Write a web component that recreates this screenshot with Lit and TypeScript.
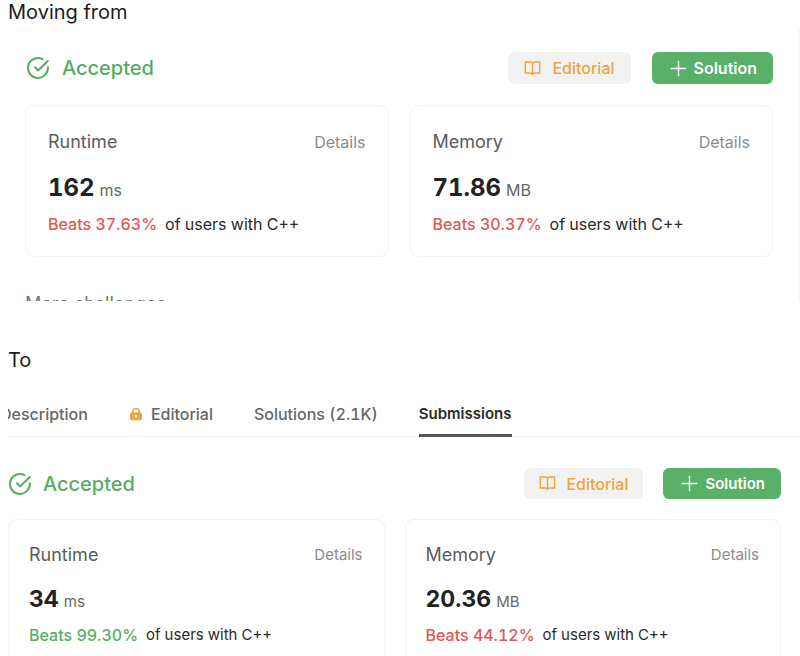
import { LitElement, html, css, svg, nothing } from "lit";
import { customElement, property } from "lit/decorators.js";

interface Stat {
  name: string;
  value: string;
  unit: string;
  beats: string;
  good?: boolean;
}

const checkIcon = svg`
  <path d="M21.9 11.2A10 10 0 1 1 16.6 3.1" />
  <path d="M9 11.3 12 14.5 21.8 5" />`;
const bookIcon = svg`
  <path d="M12 5.6C12 3.8 11 2.8 9.4 2.8H1.8V18.4H9.6C11 18.4 12 19 12 20.4C12 19 13 18.4 14.4 18.4H22.2V2.8H14.6C13 2.8 12 3.8 12 5.6ZM12 5.6V21" />`;
const plusIcon = svg`<path d="M12 1V23M1 12H23" />`;

@customElement("submission-result")
export class SubmissionResult extends LitElement {
  @property({ attribute: false }) stats: Stat[] = [];
  @property({ type: Boolean, reflect: true }) compact = false;

  static styles = css`
    :host {
      display: block;
      font-variant-numeric: tabular-nums;
      --body: 16px;
      --number: 24px;
    }
    :host([compact]) {
      --body: 15px;
      --number: 23px;
    }
    .head {
      display: flex;
      align-items: center;
      margin-bottom: 21px;
    }
    .status {
      display: flex;
      align-items: center;
      gap: 12px;
      margin: 0;
      padding-left: 1px;
      flex: 1;
      color: #54ad60;
      font-size: 20px;
      line-height: 28px;
      font-weight: 500;
    }
    svg {
      fill: none;
      stroke: currentColor;
      flex: none;
    }
    .check {
      width: 24px;
      height: 24px;
      stroke-width: 2;
      stroke-linecap: round;
      stroke-linejoin: round;
    }
    .glyph {
      width: 17px;
      height: 17px;
      stroke-width: 2;
    }
    button {
      font: inherit;
      border: 0;
      background: none;
      padding: 0;
      cursor: pointer;
    }
    .action {
      display: flex;
      align-items: center;
      height: 32px;
      padding: 0 16px;
      border-radius: 6px;
    }
    .editorial {
      gap: 11px;
      background: #f2f2f3;
      color: #f1a33c;
      margin-right: 21px;
      font-size: 16px;
      font-weight: 500;
    }
    .solution {
      gap: 7px;
      padding-left: 18px;
      background: #59b167;
      color: #fff;
      font-size: var(--body);
      font-weight: 600;
    }
    .cards {
      display: grid;
      grid-template-columns: 1fr 1fr;
      gap: 21px;
    }
    .card {
      border: 1px solid #f1f1f1;
      border-radius: 9px;
      padding: 24px 22px 20px;
    }
    .row {
      display: flex;
      justify-content: space-between;
      align-items: center;
      line-height: 24px;
      margin-bottom: 18px;
    }
    .name {
      margin: 0;
      font-size: 18px;
      font-weight: 400;
      color: #5c5c5c;
    }
    .details {
      font-size: var(--body);
      color: #8c8c8c;
    }
    .value {
      display: flex;
      align-items: baseline;
      gap: 5px;
      margin: 0 0 8px;
      line-height: 24px;
      font-size: var(--body);
      color: #666;
    }
    .value strong {
      line-height: 32px;
      font-size: var(--number);
      font-weight: 700;
      color: #222;
    }
    .beats {
      margin: 0;
      display: flex;
      gap: 8px;
      line-height: 24px;
      font-size: var(--body);
      color: #2a2a2a;
    }
    .rate {
      font-size: 16px;
      font-weight: 500;
      color: #e35755;
    }
    .good {
      color: #58ae63;
    }
    :host([compact]) .head {
      margin-bottom: 20px;
    }
    :host([compact]) .status {
      gap: 11px;
      padding-left: 0;
    }
    :host([compact]) .action {
      height: 31px;
    }
    :host([compact]) .editorial {
      gap: 10px;
      padding: 0 15px;
      margin-right: 20px;
    }
    :host([compact]) .cards {
      gap: 20px;
    }
    :host([compact]) .card {
      padding: 23px 21px 18px 20px;
    }
    :host([compact]) .row {
      margin-bottom: 16px;
    }
  `;

  render() {
    return html`
      <div class="head">
        <h3 class="status">
          <svg class="check" viewBox="0 0 24 24" aria-hidden="true">${checkIcon}</svg>
          Accepted
        </h3>
        <button class="action editorial">
          <svg class="glyph" viewBox="0 0 24 24" aria-hidden="true">${bookIcon}</svg>Editorial
        </button>
        <button class="action solution">
          <svg class="glyph" viewBox="0 0 24 24" aria-hidden="true">${plusIcon}</svg>Solution
        </button>
      </div>
      <div class="cards">
        ${this.stats.map(
          (s) => html`
            <article class="card">
              <div class="row">
                <h4 class="name">${s.name}</h4>
                <button class="details">Details</button>
              </div>
              <p class="value"><strong>${s.value}</strong><span>${s.unit}</span></p>
              <p class="beats">
                <span class="rate ${s.good ? "good" : ""}">Beats ${s.beats}</span>
                <span>of users with C++</span>
              </p>
            </article>
          `
        )}
      </div>
    `;
  }
}

@customElement("app-root")
export class AppRoot extends LitElement {
  static styles = css`
    :host {
      display: block;
      height: 100vh;
      overflow: hidden;
      background: #fff;
      color: #1c1c1c;
      font-family: Inter, "Liberation Sans", sans-serif;
    }
    .caption {
      margin: 0;
      padding-left: 8px;
      font-size: 20px;
      line-height: 24px;
      font-weight: 400;
    }
    .before {
      margin: 4px 0 47px 8px;
      padding: 24px 26px 0 17px;
      border-right: 1px solid #f4f4f4;
    }
    .more {
      margin: 37px 0 0;
      height: 7px;
      overflow: hidden;
      font-size: 18px;
      line-height: 20px;
      color: #777;
    }
    .after {
      margin: 25px 0 0 8px;
    }
    .tabs {
      display: flex;
      gap: 41px;
      overflow-x: clip;
      border-bottom: 1px solid #f0f0f0;
      margin-bottom: 31px;
      font-variant-numeric: tabular-nums;
    }
    .tab {
      display: flex;
      align-items: center;
      gap: 8px;
      height: 33px;
      padding-bottom: 4px;
      margin-bottom: -1px;
      border-bottom: 3px solid transparent;
      font-size: 16px;
      line-height: 24px;
      font-weight: 500;
      color: #666;
      text-decoration: none;
      white-space: nowrap;
    }
    .tab:first-child {
      margin-left: -8px;
    }
    .active {
      font-size: 15px;
      font-weight: 600;
      color: #2a2a2a;
      border-color: #595959;
    }
    .lock {
      width: 14px;
      height: 14px;
      fill: #f1a33c;
    }
    .body {
      padding-right: 19px;
    }
  `;

  private before: Stat[] = [
    { name: "Runtime", value: "162", unit: "ms", beats: "37.63%" },
    { name: "Memory", value: "71.86", unit: "MB", beats: "30.37%" },
  ];

  private after: Stat[] = [
    { name: "Runtime", value: "34", unit: "ms", beats: "99.30%", good: true },
    { name: "Memory", value: "20.36", unit: "MB", beats: "44.12%" },
  ];

  private tabs = [
    { label: "Description" },
    { label: "Editorial", locked: true },
    { label: "Solutions (2.1K)" },
    { label: "Submissions", active: true },
  ];

  render() {
    return html`
      <h2 class="caption">Moving from</h2>
      <section class="before">
        <submission-result .stats=${this.before}></submission-result>
        <p class="more">More challenges</p>
      </section>
      <h2 class="caption">To</h2>
      <section class="after">
        <nav class="tabs">
          ${this.tabs.map(
            (t) => html`<a class="tab ${t.active ? "active" : ""}" href="#"
              >${t.locked
                ? html`<svg class="lock" viewBox="0 0 14 14" aria-hidden="true">
                    <path
                      fill-rule="evenodd"
                      d="M3 5.5V4.8a4 4 0 0 1 8 0V5.5A2 2 0 0 1 13 7.5V11.3A2 2 0 0 1 11 13.3H3A2 2 0 0 1 1 11.3V7.5A2 2 0 0 1 3 5.5ZM4.5 5.5H9.5V4.8a2.5 2.5 0 0 0-5 0ZM7 8a1.3 1.3 0 1 0 0 2.6A1.3 1.3 0 1 0 7 8Z"
                    />
                  </svg>`
                : nothing}${t.label}</a
            >`
          )}
        </nav>
        <div class="body">
          <submission-result compact .stats=${this.after}></submission-result>
        </div>
      </section>
    `;
  }
}
